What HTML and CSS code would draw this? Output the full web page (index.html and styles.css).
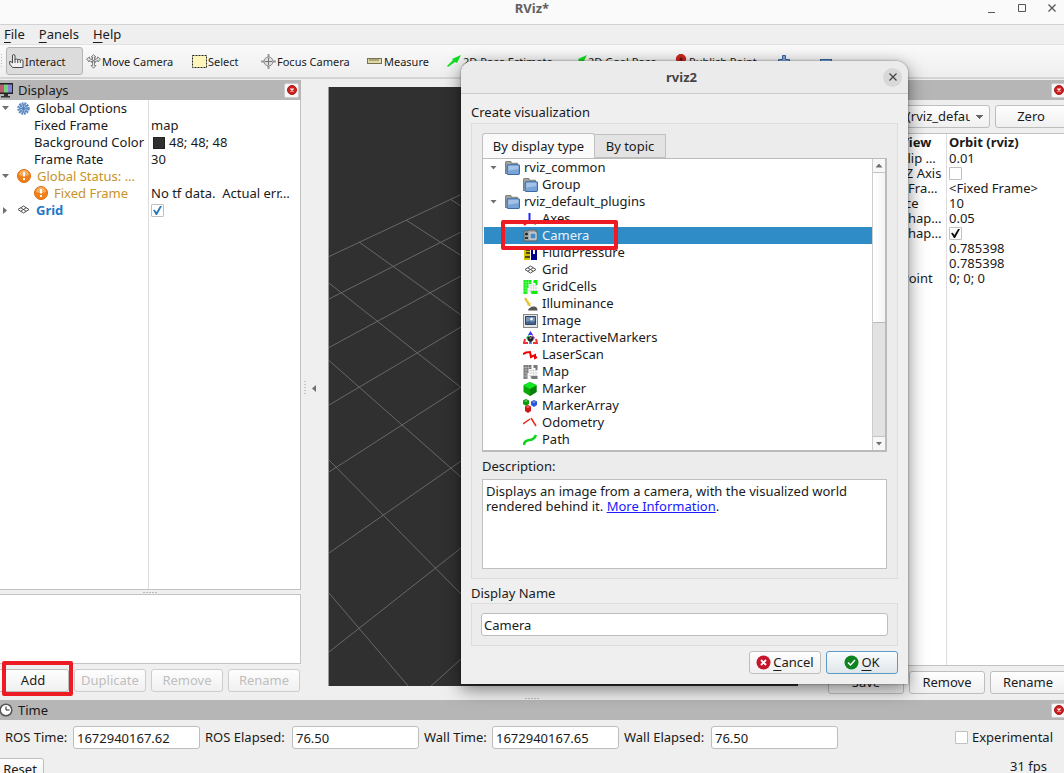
FILE: index.html
```html
<!DOCTYPE html>
<html lang="en">
<head>
<meta charset="utf-8">
<title>RViz*</title>
<link rel="stylesheet" href="styles.css">
</head>
<body>
<svg class="defs" aria-hidden="true">
  <symbol id="folder" viewBox="0 0 14 13"><path d="M.5 11V1.500q0-1 1-1h3.700l1 1.500h5.300v2" fill="#a5a5a0" stroke="#80807c"/><path d="M.5 2v9.500h2" fill="none" stroke="#80807c"/><rect x="2" y="3.500" width="11.500" height="9" rx="1" fill="#78a4d8" stroke="#3d6ba8"/><path d="M3 4.500h9.500v3L3 9z" fill="#a3c2e6"/></symbol>
  <symbol id="grid" viewBox="0 0 13 9"><path d="M6.500 1l5.500 3.500-5.500 3.500L1 4.500zM3.700 2.700l5.600 3.600M9.300 2.700L3.700 6.300" fill="none" stroke="#505050"/></symbol>
  <symbol id="cells" viewBox="0 0 14 14"><path d="M0 0h8v4H5v4H4v6H0zM10 0h4v5h-2V3h-2zM7 11h7v3H8z" fill="currentColor"/><path d="M5 5.500h9M5 8h9M5 10.500h9M7.500 4v10M10 4v7M12.500 5v6" stroke="#ccc" stroke-width=".6"/><path d="M2.500 0v14M5 0v4M0 2.500h8M0 5h5M0 8h4M0 11h4" stroke="#fff" stroke-width=".3"/></symbol>
  <symbol id="warn" viewBox="0 0 14 14"><circle cx="7" cy="7" r="6.500" fill="#f28019" stroke="#d96d10"/><path d="M2 6a5 5 0 0 1 10 0q-5 2-10 0" fill="#f9ae62"/><path d="M7 3v4.500M7 9v2" stroke="#fff" stroke-width="2"/></symbol>
  <symbol id="close" viewBox="0 0 10 10"><circle cx="5" cy="5" r="4.500" fill="#cf2020" stroke="#a81818"/><path d="M3.500 3.500l3 3m0-3l-3 3" stroke="#fff" stroke-width="1.300"/></symbol>
  <symbol id="move" viewBox="0 0 15 15"><path d="M7.500 .7L10 3H8.500v2.500l3-1V3L14.500 5l-2.500 3V6.500L8.500 8v3.500H10L7.500 14.300 5 11.500h1.500V8L3 6.500V8L.5 5l3-2v1.500l3 1V3H5z" fill="#e8e8e8" stroke="#777" stroke-width=".9"/><path d="M5 5l5 3.500M10 5L5 8.500" stroke="#777"/></symbol>
  <symbol id="pose" viewBox="0 0 14 12"><path d="M0 11L6 5 5 4l9-4-4 8-2-1-7 5z" fill="#10df20"/></symbol>
</svg>

<header class="titlebar">
  <h1>RViz*</h1>
  <div class="window-controls">
    <button aria-label="Minimize"><svg width="8" height="9"><path d="M0 8.500h7" stroke="#555"/></svg></button>
    <button aria-label="Maximize"><svg width="8" height="9"><path d="M.5.500h7v7h-7z" fill="none" stroke="#555"/></svg></button>
    <button aria-label="Close"><svg width="8" height="9"><path d="M.5.500l7 7m0-7l-7 7" stroke="#555" stroke-width="1.300"/></svg></button>
  </div>
</header>
<nav class="menubar">
  <button><u>F</u>ile</button><button><u>P</u>anels</button><button><u>H</u>elp</button>
</nav>
<div class="toolbar">
  <span class="handle"></span>
  <button class="tool interact active"><svg width="15" height="15" viewBox="0 0 15 15"><path d="M3.500 9V2q0-1.500 1.200-1.500T6 2v4q.2-1 1.300-1t1.400 1q.2-.7 1.300-.7T11.300 6.500q.2-.7 1.400-.7T14 7v6.500H3.500L.7 10V7.500Q2 7 3.500 9zM6 6v3M8.700 6v3M11.300 6.500V9" fill="#f2f2f2" stroke="#484848"/></svg>Interact</button>
  <button class="tool movecam"><svg width="15" height="15"><use href="#move"/></svg>Move Camera</button>
  <button class="tool select"><svg width="15" height="13"><rect x=".5" y=".5" width="14" height="12" fill="#fdf6b8" stroke="#222" stroke-dasharray="2 1"/></svg>Select</button>
  <button class="tool focus"><svg width="15" height="15" viewBox="0 0 15 15"><path d="M7.500 0v15M0 7.500h15" stroke="#999" stroke-width="2"/><circle cx="7.500" cy="7.500" r="4.500" fill="#ddd" stroke="#888"/><path d="M7.500 4v7M4 7.500h7" stroke="#777"/></svg>Focus Camera</button>
  <button class="tool measure"><svg width="15" height="6"><rect x=".5" y=".5" width="14" height="5" fill="#e2d9a9" stroke="#77724f"/><path d="M3 1v2m2-2v2m2-2v2m2-2v2m2-2v2" stroke="#77724f"/></svg>Measure</button>
  <button class="tool estimate"><svg width="14" height="12"><use href="#pose"/></svg>2D Pose Estimate</button>
  <button class="tool goal"><svg width="14" height="12"><use href="#pose"/></svg>2D Goal Pose</button>
  <button class="tool publish"><svg width="12" height="15" viewBox="0 0 12 15"><path d="M6 15L2 8a5 5 0 1 1 8 0z" fill="#c8281e"/><circle cx="6" cy="5" r="1.500" fill="#611"/></svg>Publish Point</button>
  <button class="tool plus" aria-label="Add tool"><svg width="13" height="13"><path d="M4.500.500h3v4h4v3h-4v4h-3v-4h-4v-3h4z" fill="#83a9d8" stroke="#3465a4"/></svg></button>
  <button class="tool" aria-label="Remove tool"><svg width="12" height="5"><rect x=".5" y=".5" width="11" height="3" fill="#83a9d8" stroke="#3465a4"/></svg></button>
</div>

<main class="workspace">
  <section class="displays">
    <header class="dock-title">
      <svg width="13" height="15" viewBox="0 0 13 15"><path d="M0 0h13v11H0z" fill="#222"/><path d="M0 1.500h4v8H0z" fill="#b85c70"/><path d="M4 1.500h4v8H4z" fill="#79d279"/><path d="M8 1.500h4v8H8z" fill="#8383de"/><path d="M4 11h4v2h2v1.500H1V13h3z" fill="#333"/></svg>
      <h2>Displays</h2>
      <button class="dock-close" aria-label="Close Displays"><svg width="10" height="10"><use href="#close"/></svg></button>
    </header>
    <div class="display-tree">
      <table>
        <tr><th class="top"><i class="arrow down"></i><svg width="13" height="13" viewBox="0 0 13 13"><circle cx="6.500" cy="6.500" r="5.300" fill="none" stroke="#5b87c0" stroke-width="1.800" stroke-dasharray="2 .8"/><circle cx="6.500" cy="6.500" r="4" fill="#a9c5e8" stroke="#4977b4"/><path d="M6.500 3v7M3 6.500h7M4 4l5 5m0-5L4 9" stroke="#4977b4" stroke-width=".8"/></svg>Global Options</th><td></td></tr>
        <tr><th class="leaf">Fixed Frame</th><td>map</td></tr>
        <tr><th class="leaf">Background Color</th><td><i class="swatch"></i>48; 48; 48</td></tr>
        <tr><th class="leaf">Frame Rate</th><td>30</td></tr>
        <tr class="warning"><th class="top"><i class="arrow down"></i><svg width="14" height="14"><use href="#warn"/></svg>Global Status: …</th><td></td></tr>
        <tr class="warning"><th class="leaf"><svg width="14" height="14"><use href="#warn"/></svg>Fixed Frame</th><td>No tf data.&nbsp; Actual err…</td></tr>
        <tr class="enabled"><th class="top"><i class="arrow right"></i><svg width="13" height="9"><use href="#grid"/></svg><label for="grid-on">Grid</label></th><td><input type="checkbox" id="grid-on" checked></td></tr>
      </table>
    </div>
    <div class="splitter"></div>
    <div class="help-box"></div>
    <div class="button-row">
      <div class="marked"><button class="btn">Add</button></div>
      <button class="btn" disabled>Duplicate</button>
      <button class="btn" disabled>Remove</button>
      <button class="btn" disabled>Rename</button>
    </div>
  </section>
  <div class="side-handle"><span class="dots"></span><i class="arrow left"></i></div>
  <div class="viewport">
    <svg viewBox="0 0 469 600" preserveAspectRatio="xMinYMin slice">
      <path d="M0 169.500L132 107.500M0 212L132 145M0 260.500L132 189M0 318L132 240M0 385L132 300M0 466L132 374M0 565L132 461M101 600L132 572M121 112L132 119M77 133L132 168.500M30 155L132 228M0 196L132 300.500M0 273.500L132 390M0 373L132 507M0 506L80 600" fill="none" stroke="#686868"/>
    </svg>
  </div>
  <section class="views">
    <header class="dock-title"><h2>Views</h2><button class="dock-close" aria-label="Close Views"><svg width="10" height="10"><use href="#close"/></svg></button></header>
    <div class="type-row">
      <label for="view-type">Type:</label>
      <select id="view-type"><option>Orbit (rviz_default_plugins)</option></select>
      <button class="btn">Zero</button>
    </div>
    <div class="view-tree">
      <table>
        <tr class="current"><th>Current View</th><td>Orbit (rviz)</td></tr>
        <tr><th>Near Clip …</th><td>0.01</td></tr>
        <tr><th><label for="invert">Invert Z Axis</label></th><td><input type="checkbox" id="invert"></td></tr>
        <tr><th>Target Fra…</th><td>&lt;Fixed Frame&gt;</td></tr>
        <tr><th>Distance</th><td>10</td></tr>
        <tr><th>Focal Shap…</th><td>0.05</td></tr>
        <tr><th><label for="shape">Focal Shap…</label></th><td><input type="checkbox" class="dark" id="shape" checked></td></tr>
        <tr><th>Yaw</th><td>0.785398</td></tr>
        <tr><th>Pitch</th><td>0.785398</td></tr>
        <tr><th>Focal Point</th><td>0; 0; 0</td></tr>
      </table>
    </div>
    <div class="button-row"><button class="btn">Save</button><button class="btn">Remove</button><button class="btn">Rename</button></div>
  </section>
</main>

<div class="splitter bottom"></div>
<section class="time">
  <header class="dock-title">
    <svg width="13" height="14" viewBox="0 0 13 14"><circle cx="6" cy="7" r="5.800" fill="#fff" stroke="#555" stroke-width="1.500"/><path d="M6 3.500V7h3.500" fill="none" stroke="#222"/></svg>
    <h2>Time</h2><button class="dock-close" aria-label="Close Time"><svg width="10" height="10"><use href="#close"/></svg></button>
  </header>
  <div class="time-row">
    <label class="short" for="ros-time">ROS Time:</label><input type="text" id="ros-time" value="1672940167.62">
    <label class="long" for="ros-elapsed">ROS Elapsed:</label><input type="text" id="ros-elapsed" value="76.50">
    <label class="short" for="wall-time">Wall Time:</label><input type="text" id="wall-time" value="1672940167.65">
    <label class="long" for="wall-elapsed">Wall Elapsed:</label><input type="text" id="wall-elapsed" value="76.50">
    <label class="experimental"><input type="checkbox">Experimental</label>
  </div>
  <div class="status-row"><button class="btn">Reset</button><output>31 fps</output></div>
</section>

<div class="dialog" role="dialog" aria-labelledby="dialog-title">
  <header class="dialog-title">
    <h2 id="dialog-title">rviz2</h2>
    <button aria-label="Close dialog"><svg width="8" height="8"><path d="M.5.500l7 7m0-7l-7 7" stroke="#444" stroke-width="1.300"/></svg></button>
  </header>
  <div class="dialog-body">
    <h3>Create visualization</h3>
    <div class="group">
      <div class="tabs" role="tablist"><button role="tab" aria-selected="true">By display type</button><button role="tab" aria-selected="false">By topic</button></div>
      <div class="list-frame">
        <ul class="plugins">
          <li class="package"><i class="arrow down"></i><svg width="15" height="14"><use href="#folder"/></svg>rviz_common</li>
          <li><svg width="15" height="14"><use href="#folder"/></svg>Group</li>
          <li class="package"><i class="arrow down"></i><svg width="15" height="14"><use href="#folder"/></svg>rviz_default_plugins</li>
          <li><svg width="15" height="14"><path d="M6.500 9V1" stroke="#22f" stroke-width="2"/><path d="M7 9l6 3" stroke="#0c0" stroke-width="2"/><path d="M6 9l-5 4" stroke="#e11" stroke-width="2"/></svg>Axes</li>
          <li class="selected"><svg width="15" height="14" viewBox="0 0 15 14"><path d="M1 2h4l1-1h7v2h1v9H1z" fill="#a4a8a8" stroke="#58666b"/><circle cx="3.500" cy="5" r="1.500" fill="#222"/><path d="M2 8h3v2H2z" fill="#333"/><rect x="7" y="4" width="6" height="6" fill="#4a88c0" stroke="#e0e4e4"/></svg>Camera<span class="mark"></span></li>
          <li><svg width="15" height="14"><path d="M1 1h6v13H1z" fill="#d5bd00"/><path d="M3 4h4M3 7h4M2 11h5" stroke="#222" stroke-width="1.500"/><path d="M8 1h6v13H8z" fill="#000090"/><path d="M10 1h2v7h-2z" fill="#fff"/></svg>FluidPressure</li>
          <li><svg width="15" height="9"><use href="#grid"/></svg>Grid</li>
          <li class="green"><svg width="15" height="14"><use href="#cells"/></svg>GridCells</li>
          <li><svg width="15" height="14"><path d="M2 1l5 8" stroke="#e3b81c" stroke-width="2"/><path d="M2.500 5l3-1M4 8l4-2" stroke="#edcf50"/><path d="M5 13.500q0-2 2.500-3 1-1.500 4-1 3 .5 3 4z" fill="#555"/></svg>Illuminance</li>
          <li><svg width="15" height="14"><rect x=".5" y=".5" width="14" height="13" fill="#e5e5e2" stroke="#888"/><path d="M2.500 2.500h10v8h-10z" fill="#7795bc" stroke="#304565"/><path d="M3 8l3-1 3 1 3-1v3H3z" fill="#47648d"/><circle cx="8.500" cy="5" r="1.300" fill="#fff"/></svg>Image</li>
          <li><svg width="15" height="14"><path d="M7.500 0L10 4H5z" fill="#33f"/><path d="M2 8L1 12h4M13 8l1 4h-4" fill="none" stroke="#e33" stroke-width="2"/><path d="M3.500 7.500L6 4.500" stroke="#2b5" stroke-width="1.500"/><path d="M9 4.500l2.500 3" stroke="#a4d" stroke-width="1.500"/><path d="M6 12h3" stroke="#27d" stroke-width="1.500"/><path d="M4.500 6.500l3-1.500 3 1.500v2.500l-3 2.500-3-2.500z" fill="#222"/><path d="M6 7l1.500-.8L9 7l-1.500.8z" fill="#bbb"/></svg>InteractiveMarkers</li>
          <li><svg width="15" height="14"><path d="M0 6l3-1.500 4-.5 1 5 4-2v3l2-1" fill="none" stroke="#f00000" stroke-width="2"/></svg>LaserScan</li>
          <li class="gray"><svg width="15" height="14"><use href="#cells"/></svg>Map</li>
          <li><svg width="15" height="14"><path d="M7 0l6.500 3v7L7 14 .5 10V3z" fill="#07a807"/><path d="M7 0l6.500 3.500L7 7 .5 3.500z" fill="#10e820"/><path d="M7 7l6.500-3.500V10L7 14z" fill="#068006"/></svg>Marker</li>
          <li><svg width="15" height="14"><path d="M3 0l3 1.500V5L3 7 0 5V1.500z" fill="#0a9a0a"/><path d="M11 1l3 1.500V6l-3 2-3-2V2.500z" fill="#2d58d8"/><path d="M5 6l3 1.500V12l-3 2-3-2V7.500z" fill="#cf1717"/><path d="M3 1l2 1-2 1-2-1zM11 2l2 1-2 1-2-1zM5 7l2 1-2 1-2-1z" fill="#fff" opacity=".4"/></svg>MarkerArray</li>
          <li><svg width="15" height="14"><path d="M0 8l7-5M8 2l5 8" fill="none" stroke="#ed2a18" stroke-width="1.500"/></svg>Odometry</li>
          <li><svg width="15" height="14"><path d="M1 12q0-4 5-5 5 0 7-5" fill="none" stroke="#0bd61c" stroke-width="2.500"/></svg>Path</li>
          <li><svg width="15" height="14"><path d="M6.500 0l3 3h-6z" fill="#f00"/></svg></li>
        </ul>
        <div class="scrollbar"><button aria-label="Scroll up"><i class="arrow up"></i></button><div class="track"><span></span></div><button aria-label="Scroll down"><i class="arrow down"></i></button></div>
      </div>
      <h3>Description:</h3>
      <div class="description">Displays an image from a camera, with the visualized world rendered behind it. <a href="#more">More Information</a>.</div>
    </div>
    <label class="name-label" for="display-name">Display Name</label>
    <div class="group name-group"><input type="text" id="display-name" value="Camera"></div>
    <div class="dialog-actions">
      <button class="btn"><svg width="15" height="15"><circle cx="7.500" cy="7.500" r="7" fill="#c7162b"/><path d="M5 5l5 5m0-5l-5 5" stroke="#fff" stroke-width="1.800"/></svg><span><u>C</u>ancel</span></button>
      <button class="btn ok"><svg width="15" height="15"><circle cx="7.500" cy="7.500" r="7" fill="#0e8420"/><path d="M4 7.500l2.500 2.500L11 5" fill="none" stroke="#fff" stroke-width="1.500"/></svg><span><u>O</u>K</span></button>
    </div>
  </div>
</div>
</body>
</html>
```
FILE: styles.css
```css
* { box-sizing: border-box; }
body {
  margin: 0; height: 100vh; overflow: hidden; position: relative;
  display: flex; flex-direction: column;
  background: #efefef; color: #1a1a1a;
  font: 13px/17px "Noto Sans", "Open Sans", sans-serif;
}
button, input, select { font: inherit; color: inherit; margin: 0; }
button { border: 0; background: none; padding: 0; white-space: nowrap; }
h1, h2, h3 { margin: 0; font: inherit; }
svg { flex: none; display: block; }
.defs { position: absolute; width: 0; height: 0; }
u { text-underline-offset: 3px; }

.titlebar { flex: none; height: 25px; padding-bottom: 7px; background: #fafafa; border-bottom: 1px solid #d2d2d2; display: grid; grid-template-columns: 1fr auto 1fr; align-items: center; }
.titlebar h1 { grid-column: 2; font-weight: 700; color: #606060; }
.window-controls { justify-self: end; display: flex; gap: 22px; padding-right: 8px; }
.menubar { flex: none; height: 20px; display: flex; gap: 14px; padding-left: 4px; border-bottom: 1px solid #e2e2e2; }
.toolbar { flex: none; height: 34px; display: flex; align-items: center; background: linear-gradient(#fafafa, #eee); border-bottom: 2px solid #d4d4d4; font-size: 11px; overflow: hidden; }
.handle { width: 3px; height: 16px; margin-right: 3px; flex: none; background: radial-gradient(#bbb 35%, transparent 40%) 0 0 / 3px 3px; }
.tool { flex: none; display: flex; align-items: center; gap: 1px; height: 28px; }
.interact { width: 77px; padding-left: 2px; border: 1px solid #b4b4b4; border-radius: 3px; background: #dcdcdc; }
.movecam { width: 109px; padding-left: 3px; }
.select { width: 69px; }
.focus { width: 106px; }
.measure { width: 80px; gap: 2px; }
.estimate { width: 126px; gap: 2px; }
.goal { width: 102px; }
.publish { width: 103px; gap: 2px; }
.plus { width: 42px; }

.workspace { flex: 1; min-height: 0; display: flex; padding-top: 1px; }
.dock-title { flex: none; height: 20px; display: flex; align-items: center; gap: 5px; background: #b6b6b6; }
.dock-close { margin-left: auto; width: 15px; height: 15px; display: grid; place-items: center; border: 1px solid #ccc; border-radius: 2px; background: #f7f7f7; }
.displays { flex: none; width: 301px; display: flex; flex-direction: column; padding-bottom: 5px; }
.displays .dock-close { margin-right: 2px; }
table { border-collapse: collapse; table-layout: fixed; width: 100%; }
th, td { padding: 0; height: 17px; line-height: 17px; font-weight: 400; text-align: left; white-space: nowrap; }
.display-tree { flex: 1; min-height: 0; border: solid #c2c2c2; border-width: 0 1px 1px 0; background: linear-gradient(#ddd, #ddd) 148px 0 / 1px 100% no-repeat #fff; }
.display-tree th { width: 148px; }
.display-tree td { padding-left: 3px; }
.display-tree th svg { display: inline-block; vertical-align: -2px; margin-right: 6px; }
.display-tree th svg[height="9"] { vertical-align: 1px; }
.top { padding-left: 2px; }
.top .arrow { margin-right: 8px; }
.display-tree .leaf { padding-left: 34px; }
.warning th { color: #c8922a; }
.enabled th { color: #1f78c8; font-weight: 700; }
.swatch { display: inline-block; width: 12px; height: 12px; margin: 0 4px 0 2px; vertical-align: -2px; background: #303030; border: 1px solid #222; }
.arrow { display: inline-block; width: 7px; height: 4px; background: #707070; clip-path: polygon(0 0, 100% 0, 50% 100%); vertical-align: 3px; flex: none; }
.arrow.up { clip-path: polygon(50% 0, 100% 100%, 0 100%); }
.arrow.right { width: 4px; height: 7px; margin: 0 10px 0 1px; vertical-align: 1px; clip-path: polygon(0 0, 100% 50%, 0 100%); }
.arrow.left { width: 4px; height: 7px; clip-path: polygon(100% 0, 100% 100%, 0 50%); }
input[type="checkbox"] { appearance: none; flex: none; width: 13px; height: 13px; border: 1px solid #c0c0c0; border-radius: 1px; background: #fff; display: inline-block; vertical-align: -2px; }
td input[type="checkbox"] { display: block; }
input[type="checkbox"]:checked::before { content: ""; display: block; width: 9px; height: 9px; margin: 1px; background: #2878b8; clip-path: polygon(0 45%, 20% 42%, 38% 68%, 78% 0, 100% 0, 45% 100%, 32% 100%); }
input.dark:checked::before { background: #111; }
.splitter { flex: none; height: 4px; background: repeating-linear-gradient(90deg, #bbb 0 2px, transparent 2px 3px) center / 15px 1px no-repeat; }
.help-box { flex: none; height: 70px; border: 1px solid #c4c4c4; border-left: 0; background: #fff; }
.button-row { flex: none; display: flex; gap: 5px; padding-top: 5px; }
.btn { height: 23px; padding: 0 6px; border: 1px solid #bdbdbd; border-radius: 3px; background: linear-gradient(#fefefe, #f0f0f0); display: flex; align-items: center; justify-content: center; gap: 2px; }
.btn:disabled { color: #bebebe; border-color: #cdcdcd; }
.displays .button-row > * { width: 72px; }
.displays .button-row { margin-left: -3px; }
.marked { position: relative; }
.marked .btn { width: 100%; }
.marked::after, .mark { content: ""; position: absolute; border: 4px solid #ed1c24; border-radius: 2px; pointer-events: none; }
.marked::after { inset: -8px -4px -4px 5px; }
.side-handle { flex: none; width: 27px; display: flex; align-items: center; gap: 6px; padding-left: 3px; }
.dots { width: 2px; height: 15px; background: repeating-linear-gradient(#c4c4c4 0 1px, transparent 1px 3px); }
.viewport { flex: 1; min-width: 0; margin: 7px 0 11px; background: #303030; border-left: 1px solid #999; overflow: hidden; }
.viewport svg { width: 100%; height: 100%; }
.views { flex: none; width: 238px; margin-left: 28px; display: flex; flex-direction: column; padding-bottom: 3px; }
.views .dock-title { padding-left: 20px; }
.views .dock-close, .time .dock-close { margin-right: -2px; }
.type-row { flex: none; display: flex; gap: 5px; align-items: center; height: 33px; width: 241px; }
.type-row label { width: 32px; }
.type-row select { width: 127px; height: 23px; appearance: none; padding: 0 19px 0 8px; border: 1px solid #bdbdbd; border-radius: 3px; background: linear-gradient(to bottom left, #666 50%, transparent 50%) 112px 9px / 4px 4px no-repeat, linear-gradient(to bottom right, #666 50%, transparent 50%) 116px 9px / 4px 4px no-repeat, linear-gradient(#fefefe, #f0f0f0); }
.type-row .btn { width: 72px; }
.view-tree { flex: 1; min-height: 0; border: solid #c2c2c2; border-width: 1px 0 1px 1px; background: linear-gradient(#ddd, #ddd) 119px 0 / 1px 100% no-repeat #fff; overflow: hidden; }
.view-tree th, .view-tree td { height: 15px; line-height: 15px; }
.view-tree th { width: 120px; padding-left: 39px; }
.view-tree td { padding-left: 2px; }
.view-tree .current th { padding-left: 20px; }
.view-tree .current th, .view-tree .current td { font-weight: 700; height: 17px; line-height: 17px; }
.views .button-row { width: 241px; padding-left: 2px; }
.views .button-row .btn { width: 76px; flex: none; }

.bottom { height: 3px; }
.time { flex: none; height: 73px; overflow: hidden; }
.time-row { display: flex; align-items: center; gap: 5px; height: 35px; padding: 0 11px 0 5px; }
.time-row > * { flex: none; }
input[type="text"] { height: 23px; padding: 0 3px; border: 1px solid #bdbdbd; border-radius: 3px; background: #fff; outline: 0; }
.time-row input[type="text"] { width: 127px; }
.short { width: 63px; white-space: nowrap; }
.long { width: 82px; white-space: nowrap; }
.experimental { margin-left: auto; display: flex; align-items: center; gap: 4px; }
.status-row { display: flex; justify-content: space-between; padding: 3px 17px 0 0; }
.status-row .btn { width: 48px; margin-left: -4px; padding: 0; }

.dialog { position: absolute; left: 461px; top: 61px; width: 447px; border-radius: 12px 12px 0 0; background: #efefef; box-shadow: 0 0 2px rgba(0,0,0,.5), 0 5px 18px rgba(0,0,0,.5); }
.dialog-title { height: 33px; padding-right: 6px; display: grid; grid-template-columns: 1fr auto 1fr; align-items: center; border-bottom: 1px solid #ccc; border-radius: 12px 12px 0 0; background: #ebebeb; }
.dialog-title h2 { grid-column: 2; font-weight: 700; color: #444; }
.dialog-title button { justify-self: end; width: 19px; height: 19px; border-radius: 50%; display: grid; place-items: center; background: #d8d8d8; }
.dialog-body { padding: 10px; }
.group { margin-top: 2px; padding: 9px 10px; border: 1px solid #ddd; background: #ececec; }
.tabs { display: flex; align-items: flex-end; }
.tabs button { height: 24px; width: 71px; border: 1px solid #c0c0c0; border-left: 0; background: #e3e3e3; }
.tabs button[aria-selected="true"] { height: 25px; width: 113px; border: 1px solid #c0c0c0; border-bottom: 0; border-radius: 3px 3px 0 0; background: #fafafa; }
.list-frame { height: 294px; display: flex; border: 1px solid #bbb; border-bottom-width: 2px; border-right-width: 2px; background: #fff; padding-left: 1px; }
.plugins { flex: 1; margin: 0; padding: 0; list-style: none; overflow: hidden; }
.plugins li { position: relative; height: 17px; display: flex; align-items: center; gap: 4px; padding-left: 39px; }
.plugins .package { padding-left: 6px; }
.package .arrow { margin-right: 4px; }
.plugins .selected { background: #308cc6; color: #e8f2fa; }
.plugins .mark { left: 17px; top: -7px; width: 117px; height: 30px; z-index: 1; }
.green svg { color: #0af00a; }
.gray svg { color: #777; }
.scrollbar { width: 13px; display: flex; flex-direction: column; border-left: 1px solid #ccc; background: #f7f7f7; }
.scrollbar button { flex: none; height: 13px; display: grid; place-items: center; }
.track { flex: 1; background: #e2e2e2; border: solid #c4c4c4; border-width: 1px 0; }
.track span { display: block; height: 57%; background: linear-gradient(90deg, #fff, #f4f4f4); border-bottom: 1px solid #bbb; }
.group h3 { margin: 6px 0 4px; }
.description { height: 90px; border: 1px solid #c0c0c0; background: #fff; padding: 4px 3px; line-height: 15px; }
.description a { color: #1a1aff; }
.name-label { display: block; margin-top: 6px; }
.name-group { margin-top: 1px; padding: 9px; }
.name-group input { display: block; width: 100%; padding: 0 2px; }
.dialog-actions { display: flex; justify-content: flex-end; gap: 5px; margin-top: 5px; }
.dialog-actions .btn { width: 72px; }
.dialog-actions .ok { border-color: #5d9bc4; background: linear-gradient(#fafcfd, #dfe6ea); }
```
